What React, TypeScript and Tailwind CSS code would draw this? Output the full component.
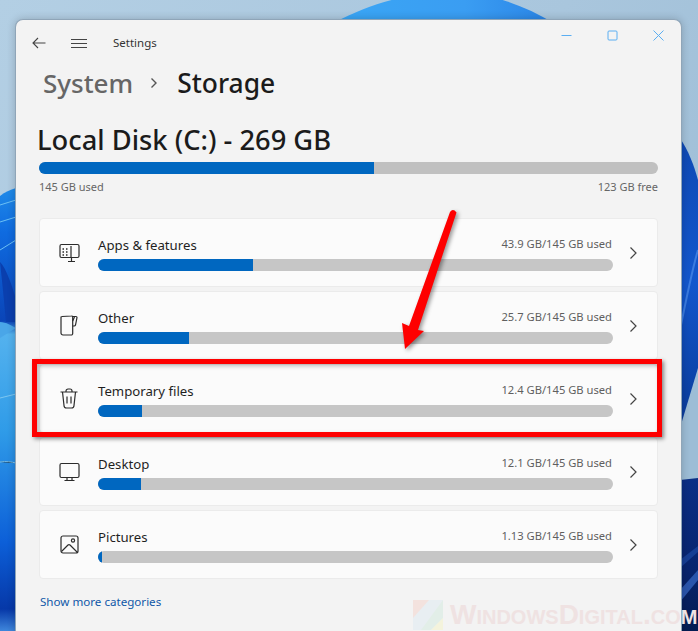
import React from "react";

const font = { fontFamily: '"Noto Sans", "Open Sans", sans-serif' };

function Wallpaper() {
  return (
    <svg className="absolute inset-0" width="698" height="631" viewBox="0 0 698 631">
      <defs>
        <linearGradient id="sky" x1="0" y1="0" x2="1" y2="0.6">
          <stop offset="0" stopColor="#b3cfe4" />
          <stop offset="0.6" stopColor="#a9c6dd" />
          <stop offset="1" stopColor="#9dbdd6" />
        </linearGradient>
        <linearGradient id="dome" x1="0" y1="0" x2="1" y2="0">
          <stop offset="0" stopColor="#3aa6f5" />
          <stop offset="0.6" stopColor="#3a9df2" />
          <stop offset="1" stopColor="#2a84e6" />
        </linearGradient>
        <linearGradient id="left" x1="0" y1="0" x2="0" y2="1">
          <stop offset="0" stopColor="#1f8ae8" />
          <stop offset="0.1" stopColor="#0f6be0" />
          <stop offset="0.3" stopColor="#0a45b8" />
          <stop offset="0.33" stopColor="#54b2ee" />
          <stop offset="0.55" stopColor="#2f9be8" />
          <stop offset="0.8" stopColor="#0c5fd8" />
          <stop offset="0.95" stopColor="#0638a8" />
          <stop offset="1" stopColor="#3f86dc" />
        </linearGradient>
        <linearGradient id="right" x1="0" y1="0" x2="0" y2="1">
          <stop offset="0" stopColor="#0f49b4" />
          <stop offset="0.5" stopColor="#1257cd" />
          <stop offset="1" stopColor="#0a3a98" />
        </linearGradient>
        <linearGradient id="navy" x1="0" y1="0" x2="0" y2="1">
          <stop offset="0" stopColor="#0b2f86" />
          <stop offset="0.6" stopColor="#08246e" />
          <stop offset="1" stopColor="#041c52" />
        </linearGradient>
      </defs>
      <rect width="698" height="631" fill="url(#sky)" />
      <path d="M335 22 C370 4 410 -8 450 -8 C490 -8 525 6 552 22 Z" fill="url(#dome)" />
      <path d="M0 196 C5 192 10 190 16 188 L16 631 L0 631 Z" fill="url(#left)" />
      <path d="M0 205 L16 200 M0 222 L16 217 M0 250 L16 240" stroke="#6cc0f4" strokeWidth="1" />
      <path d="M0 262 C6 268 12 285 16 300 L16 322 L6 322 C4 300 2 280 0 262Z" fill="#0a3fae" />
      <path d="M0 322 C6 322 12 326 16 328 L0 338Z" fill="#4aa6e8" />
      <path d="M0 398 L16 394 M0 462 C6 461 12 462 16 463" stroke="#7ec6f0" strokeWidth="1" />
      <path d="M680 138 C688 150 694 165 698 180 L698 368 L680 428 Z" fill="url(#right)" />
      <path d="M680 480 L698 478 L698 631 L680 631 Z" fill="url(#navy)" />
      <path d="M680 590 L698 570 L698 580 L680 602Z" fill="#2a55ac" />
      <path d="M680 560 L698 546 L698 552 L680 568Z" fill="#163e94" />
      <path d="M680 330 C686 300 692 270 698 250" stroke="#3a7be0" strokeWidth="2" fill="none" />
    </svg>
  );
}

function Row({ icon, label, value, fill }: { icon: React.ReactNode; label: string; value: string; fill: React.ReactNode }) {
  return (
    <div className="flex h-[69px] items-start rounded-[4px] border border-[#ebebeb] bg-[#fbfbfb]">
      <div className="flex h-full w-[58px] shrink-0 items-center justify-center">{icon}</div>
      <div className="w-[515px] shrink-0 pt-[15px]">
        <div className="flex h-[25px] items-center justify-between pb-[4px]">
          <span className="text-[13.2px] leading-[20px] text-[#1f1f1f]">{label}</span>
          <span className="pr-[1px] pb-[2px] text-[11.2px] leading-[18px] text-[#5f5f5f]">{value}</span>
        </div>
        <div className="h-[12px] overflow-hidden rounded-full bg-[#c6c6c6]">{fill}</div>
      </div>
      <div className="flex h-full flex-1 items-center justify-center pr-[4px] pt-[1px]">
        <svg width="10" height="14" viewBox="0 0 10 14" fill="none" stroke="#444" strokeWidth="1.2">
          <path d="M2.5 1.5 L8 7 L2.5 12.5" />
        </svg>
      </div>
    </div>
  );
}

const stroke = { fill: "none", stroke: "#2b2b2b", strokeWidth: 1.2 };

const AppsIcon = (
  <svg width="21" height="20" viewBox="0 0 21 20" {...stroke}>
    <path d="M1 3 a1.5 1.5 0 0 1 1.5 -1.5 H18.5 a1.5 1.5 0 0 1 1.5 1.5 V13 a1.5 1.5 0 0 1 -1.5 1.5 H12" />
    <path d="M1 3 V13 a1.5 1.5 0 0 0 1.5 1.5 H12 V3" />
    <path d="M12 14.5 H14 M9 18.5 H16 M12.5 14.5 V18 M12.5 18.5 H13" />
    <path d="M3.5 6 h1.5 M7 6 h1.5 M3.5 9 h1.5 M7 9 h1.5 M3.5 12 h1.5 M7 12 h1.5" strokeWidth="1.3" />
  </svg>
);
const OtherIcon = (
  <svg width="18" height="21" viewBox="0 0 18 21" {...stroke}>
    <path d="M2 1.5 L11.5 1 a1 1 0 0 1 1.2 1 V18.5 a1.5 1.5 0 0 1 -1.5 1.5 H3 a2 2 0 0 1 -2 -2 V2.5 a1 1 0 0 1 1 -1 Z" />
    <path d="M12.5 1.5 H16 a1 1 0 0 1 1 1 L15.5 10 a1.5 1.5 0 0 1 -1.5 1 H12.7" />
    <path d="M12.7 6 L14.5 2" />
  </svg>
);
const TrashIcon = (
  <svg width="20" height="21" viewBox="0 0 20 21" {...stroke}>
    <path d="M1.5 4 H18.5 M7 4 V3 a2 2 0 0 1 2 -2 h2 a2 2 0 0 1 2 2 V4" />
    <path d="M3.5 4 L5 17.5 a2.5 2.5 0 0 0 2.5 2.5 h5 a2.5 2.5 0 0 0 2.5 -2.5 L16.5 4" />
    <path d="M8 8.5 V15.5 M12 8.5 V15.5" />
  </svg>
);
const DesktopIcon = (
  <svg width="21" height="20" viewBox="0 0 21 20" {...stroke}>
    <rect x="1" y="1.5" width="19" height="14" rx="1.5" />
    <path d="M8 15.5 V18.5 M13 15.5 V18.5 M5.5 18.5 H15.5" />
  </svg>
);
const PictureIcon = (
  <svg width="19" height="19" viewBox="0 0 19 19" {...stroke}>
    <rect x="1" y="1" width="17" height="17" rx="2" />
    <path d="M1.5 16.5 L8 10 a1.5 1.5 0 0 1 2 0 L17.5 17.5" />
    <circle cx="13" cy="5.5" r="1.6" />
  </svg>
);

const fillCls = "h-full bg-[#0067c0]";

export default function App() {
  return (
    <div className="relative h-[631px] w-[698px] overflow-hidden" style={font}>
      <Wallpaper />
      <div className="relative ml-[15px] h-[631px] w-[667px] translate-y-[19px] rounded-t-[8px] border-l border-r border-t border-[#8fa5b8] bg-[#f3f3f3] shadow-[0_0_8px_rgba(0,0,0,0.2)]">
        <div className="flex h-[46px] items-center">
          <div className="ml-[15px] flex h-[46px] w-[16px] items-center justify-center">
            <svg width="14" height="12" viewBox="0 0 14 12" fill="none" stroke="#444" strokeWidth="1.1">
              <path d="M13.5 6 H1 M6 1 L1 6 L6 11" />
            </svg>
          </div>
          <div className="ml-[24px] flex flex-col gap-[3px]">
            <div className="h-[1px] w-[16px] bg-[#444]" />
            <div className="h-[1px] w-[16px] bg-[#444]" />
            <div className="h-[1px] w-[16px] bg-[#444]" />
          </div>
          <span className="ml-[26px] text-[11.5px] text-[#333]">Settings</span>
          <div className="ml-auto mb-[15px] mr-[17px] flex items-center gap-[35px]">
            <svg width="11" height="11" viewBox="0 0 11 11" stroke="#5aaef2" fill="none"><path d="M0.5 5.5 H10.5" /></svg>
            <svg width="11" height="11" viewBox="0 0 11 11" stroke="#5aaef2" fill="none"><rect x="1" y="1" width="9" height="9" rx="1" /></svg>
            <svg width="11" height="11" viewBox="0 0 11 11" stroke="#5aaef2" fill="none"><path d="M0.5 0.5 L10.5 10.5 M10.5 0.5 L0.5 10.5" /></svg>
          </div>
        </div>
        <div className="ml-[27px] mt-[2px] flex h-[30px] items-center">
          <span className="text-[26px] font-medium leading-[30px] text-[#666]">System</span>
          <svg className="ml-[16px] mr-[18px]" width="10" height="12" viewBox="0 0 10 12" fill="none" stroke="#555" strokeWidth="1.4">
            <path d="M2.5 1.5 L7 6 L2.5 10.5" />
          </svg>
          <span className="text-[26.4px] font-medium leading-[30px] text-[#1b1b1b]">Storage</span>
        </div>
        <div className="ml-[21px] mt-[24px] text-[27.3px] font-medium leading-[36px] text-[#1b1b1b]">Local Disk (C:) - 269 GB</div>
        <div className="ml-[23px] mt-[4px] h-[12px] w-[619px] overflow-hidden rounded-full bg-[#c0c0c0]">
          <div className={`${fillCls} w-[335px]`} />
        </div>
        <div className="ml-[23px] mt-[5px] flex w-[619px] justify-between text-[11px] leading-[16px] text-[#666]">
          <span>145 GB used</span>
          <span>123 GB free</span>
        </div>
        <div className="ml-[23px] mt-[23px] flex w-[619px] flex-col gap-[4px]">
          <Row icon={AppsIcon} label="Apps & features" value="43.9 GB/145 GB used" fill={<div className={`${fillCls} w-[155px]`} />} />
          <Row icon={OtherIcon} label="Other" value="25.7 GB/145 GB used" fill={<div className={`${fillCls} w-[91px]`} />} />
          <Row icon={TrashIcon} label="Temporary files" value="12.4 GB/145 GB used" fill={<div className={`${fillCls} w-[44px]`} />} />
          <Row icon={DesktopIcon} label="Desktop" value="12.1 GB/145 GB used" fill={<div className={`${fillCls} w-[43px]`} />} />
          <Row icon={PictureIcon} label="Pictures" value="1.13 GB/145 GB used" fill={<div className={`${fillCls} w-[4px]`} />} />
        </div>
        <div className="ml-[24px] mt-[14px] text-[11.6px] leading-[18px] text-[#1058a8]">Show more categories</div>
      </div>

      {/* Watermark */}
      <div className="absolute left-[413px] top-[600px] flex items-center gap-[7px]">
        <svg width="30" height="30" viewBox="0 0 30 30">
          <rect width="30" height="30" fill="#e8eef2" />
          <path d="M0 0 H16 L0 18Z" fill="#f3e2de" />
          <path d="M30 0 V18 L18 30 H8Z" fill="#e2eee8" />
          <path d="M30 18 V30 H18Z" fill="#f4f3dc" />
        </svg>
        <span className="whitespace-nowrap text-[28px] font-bold leading-[30px] text-[#efe2e2]" style={{ fontFamily: '"Liberation Sans", sans-serif', fontVariant: "small-caps" }}>
          WindowsDigital.com
        </span>
      </div>

      {/* Annotation arrow */}
      <svg className="absolute left-0 top-0 drop-shadow-[2px_2px_2px_rgba(0,0,0,0.4)]" width="698" height="631" viewBox="0 0 698 631">
        <path d="M450 212 Q453 208 456.5 212.5 L418 330 L424 331 L405 349 L402 323 L409 326 Z" fill="#fe0000" />
      </svg>

      {/* Highlight box */}
      <div className="absolute left-[32px] top-[359px] h-[78px] w-[630px] border-[5px] border-[#fe0000] shadow-[2px_2px_4px_rgba(0,0,0,0.45),inset_2px_2px_4px_rgba(0,0,0,0.25)]" />
    </div>
  );
}
